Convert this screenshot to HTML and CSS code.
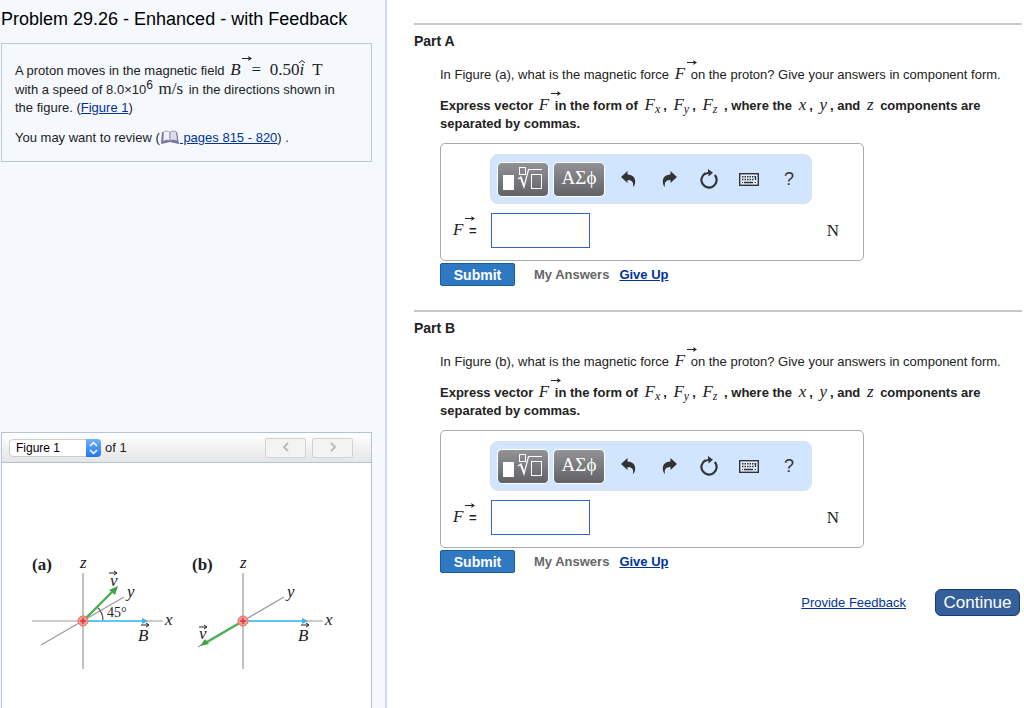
FILE: index.html
```html
<!DOCTYPE html>
<html lang="en">
<head>
    <meta charset="UTF-8">
    <meta name="viewport" content="width=device-width, initial-scale=1.0">
    <title>Problem 29.26 - Enhanced - with Feedback</title>
    <link rel="stylesheet" href="styles.css">
</head>
<body>
    <!-- shared icons -->
    <svg class="sprite" aria-hidden="true">
        <symbol id="vec-arrow" viewBox="0 0 10 5">
            <path d="M0 2.5H8" stroke="currentColor" stroke-width="1"/>
            <path d="M6 0L10 2.5L6 5L7 2.5Z" fill="currentColor"/>
        </symbol>
        <symbol id="icon-template" viewBox="0 0 40 26">
            <rect x="0" y="10" width="11" height="15" fill="#fff"/>
            <rect x="16.500" y="2.500" width="6" height="7" fill="none" stroke="#fff" stroke-width="1"/>
            <path d="M15 14L18 12L21 22L25.500 4.500H39" fill="none" stroke="#fff" stroke-width="1.200"/>
            <path d="M18 13L21 21" stroke="#fff" stroke-width="2"/>
            <rect x="28.500" y="9.500" width="10" height="14" fill="none" stroke="#fff" stroke-width="1"/>
        </symbol>
        <symbol id="icon-undo" viewBox="0 0 16 16">
            <path d="M0 6L6.500 0V3.500C12 3.500 15 7 14 12.500C13.800 14 13 15.300 12 16C12.800 12 11.500 8.800 6.500 9V12Z" fill="#333"/>
        </symbol>
        <symbol id="icon-reset" viewBox="0 0 20 20">
            <path d="M6.500 4.200A7.600 7.600 0 1 0 15.800 6" fill="none" stroke="#333" stroke-width="2.200"/>
            <path d="M9 0L14 3.700L9.500 7.500V4.800L6 6V4L9 3Z" fill="#333"/>
        </symbol>
        <symbol id="icon-keyboard" viewBox="0 0 20 13">
            <rect x="0.700" y="0.700" width="18.600" height="11.600" fill="#fff" fill-opacity="0.400" stroke="#333" stroke-width="1.400"/>
            <path d="M3 3.700H17M3 6.500H15" stroke="#333" stroke-width="1.500" stroke-dasharray="1.500 1"/>
            <path d="M16.500 3V7M5 9.500H14" stroke="#333" stroke-width="1.300"/>
            <path d="M3 9.500H4M15.500 9.500H17" stroke="#333" stroke-width="1.200"/>
        </symbol>
    </svg>

    <div class="page">
        <aside class="sidebar">
            <h1 class="title">Problem 29.26 - Enhanced - with Feedback</h1>
            <div class="problem">
                <p>A proton moves in the magnetic field <span class="vec">B<svg class="vec-arrow"><use href="#vec-arrow"/></svg></span><span class="math equation">=&nbsp; 0.50<i class="hat">i<svg class="hat-mark" viewBox="0 0 6 3"><path d="M0 3L3 0.500L6 3" fill="none" stroke="currentColor"/></svg></i>&nbsp; T</span><br>
                with a speed of 8.0×10<sup>6</sup> <span class="math">m/s</span> in the directions shown in<br>
                the figure. (<a href="#figure">Figure 1</a>)</p>
                <p>You may want to review (<a href="#pages"><svg class="book" viewBox="0 0 20 16"><path d="M2 2L1 14L10 12L19 14L17 2L10 3Z" fill="#77719b"/><path d="M3.500 2C6 0.500 8.500 1 10 2.500V11C8 9.500 5 10 3 11.500Z" fill="#f2f2f6" stroke="#8d88ad" stroke-width="0.700"/><path d="M10 2.500C12 0.500 14.500 0.800 16.500 2L17.500 11.500C15 9.800 12 9.500 10 11Z" fill="#dedee9" stroke="#77719b" stroke-width="0.700"/></svg> pages 815 - 820</a>) .</p>
            </div>

            <div class="figure-panel" id="figure">
                <div class="figure-bar">
                    <div class="select-wrap">
                        <select class="figure-select" aria-label="Figure">
                            <option>Figure 1</option>
                        </select>
                        <span class="stepper"><svg viewBox="0 0 15 18"><path d="M4 7L7.500 3.500L11 7M4 11L7.500 14.500L11 11" fill="none" stroke="#fff" stroke-width="1.500"/></svg></span>
                    </div>
                    <span class="count">of 1</span>
                    <div class="figure-nav">
                        <button class="nav-btn" aria-label="Previous figure" disabled><svg viewBox="0 0 8 10"><path d="M6 1L2 5L6 9" fill="none" stroke="#bbb" stroke-width="2"/></svg></button>
                        <button class="nav-btn" aria-label="Next figure" disabled><svg viewBox="0 0 8 10"><path d="M2 1L6 5L2 9" fill="none" stroke="#bbb" stroke-width="2"/></svg></button>
                    </div>
                </div>
                <div class="figure-body">
                    <svg class="figure-drawing" viewBox="0 0 310 120">
                        <defs>
                            <g id="proton">
                                <circle r="5" fill="#f79a92" stroke="#e96b67" stroke-width="1"/>
                                <path d="M-3 0H3M0 -3V3" stroke="#d9333b" stroke-width="1.500"/>
                            </g>
                            <g id="field">
                                <path d="M0 0H60" stroke="#5cc4f6" stroke-width="1.800"/>
                                <path d="M59 -3L65 0L59 3Z" fill="#3fb2ef"/>
                            </g>
                            <path id="over-arrow" d="M0 0H8M5 -2L8 0L5 2" fill="none" stroke="#222" stroke-width="1"/>
                        </defs>
                        <!-- (a) -->
                        <g fill="none" stroke="#999" stroke-width="1.200">
                            <path d="M2 71H133M53 23V119M11 95L94 47"/>
                            <path d="M67 57C72 61 73 66 73 71" stroke="#555"/>
                        </g>
                        <use href="#field" x="53" y="71"/>
                        <path d="M53 71L82 42" stroke="#4eae52" stroke-width="2.400"/>
                        <path d="M88 36L85 45L79 40Z" fill="#3fa447"/>
                        <use href="#proton" x="53" y="71"/>
                        <text class="fig-label" x="2" y="20">(a)</text>
                        <text class="fig-axis" x="50" y="18">z</text>
                        <text class="fig-axis" x="80" y="36">v</text>
                        <use href="#over-arrow" x="79" y="23"/>
                        <text class="fig-axis" x="97" y="47">y</text>
                        <text class="fig-angle" x="77" y="67">45°</text>
                        <text class="fig-axis" x="135" y="75">x</text>
                        <text class="fig-axis" x="108" y="91">B</text>
                        <use href="#over-arrow" x="111" y="75"/>
                        <!-- (b) -->
                        <path d="M213 71H293M213 23V119M168 97L254 47" stroke="#999" stroke-width="1.200"/>
                        <use href="#field" x="213" y="71"/>
                        <path d="M213 71L177 92" stroke="#4eae52" stroke-width="2.400"/>
                        <path d="M170 96L175 89L179 94Z" fill="#3fa447"/>
                        <use href="#proton" x="213" y="71"/>
                        <text class="fig-label" x="162" y="20">(b)</text>
                        <text class="fig-axis" x="210" y="18">z</text>
                        <text class="fig-axis" x="257" y="47">y</text>
                        <text class="fig-axis" x="169" y="89">v</text>
                        <use href="#over-arrow" x="169" y="77"/>
                        <text class="fig-axis" x="295" y="75">x</text>
                        <text class="fig-axis" x="268" y="91">B</text>
                        <use href="#over-arrow" x="271" y="75"/>
                    </svg>
                </div>
            </div>
        </aside>

        <main class="content">
            <section class="part">
                <h2>Part A</h2>
                <div class="part-body">
                    <p class="question">In Figure (a), what is the magnetic force <span class="vec">F<svg class="vec-arrow"><use href="#vec-arrow"/></svg></span> on the proton? Give your answers in component form.</p>
                    <p class="instructions">Express vector <span class="vec">F<svg class="vec-arrow"><use href="#vec-arrow"/></svg></span> in the form of <i class="math">F<sub>x</sub></i>, <i class="math">F<sub>y</sub></i>, <i class="math">F<sub>z</sub></i> , where the <i class="math">x</i>, <i class="math">y</i>, and <i class="math">z</i> components are<br>separated by commas.</p>
                    <div class="answer">
                        <div class="toolbar">
                            <button class="tool-btn" aria-label="Templates"><svg class="template"><use href="#icon-template"/></svg></button>
                            <button class="tool-btn">ΑΣϕ</button>
                            <button class="icon-btn" aria-label="Undo"><svg class="arrow-icon"><use href="#icon-undo"/></svg></button>
                            <button class="icon-btn" aria-label="Redo"><svg class="arrow-icon flip"><use href="#icon-undo"/></svg></button>
                            <button class="icon-btn" aria-label="Reset"><svg class="reset-icon"><use href="#icon-reset"/></svg></button>
                            <button class="icon-btn" aria-label="Keyboard shortcuts"><svg class="keyboard-icon"><use href="#icon-keyboard"/></svg></button>
                            <button class="icon-btn">?</button>
                        </div>
                        <div class="answer-row">
                            <label for="answerA"><span class="vec">F<svg class="vec-arrow"><use href="#vec-arrow"/></svg></span> =</label>
                            <input type="text" class="answer-input" id="answerA">
                            <span class="unit">N</span>
                        </div>
                    </div>
                    <div class="actions">
                        <button class="submit-btn">Submit</button>
                        <span class="my-answers">My Answers</span>
                        <a href="#giveup">Give Up</a>
                    </div>
                </div>
            </section>

            <section class="part">
                <h2>Part B</h2>
                <div class="part-body">
                    <p class="question">In Figure (b), what is the magnetic force <span class="vec">F<svg class="vec-arrow"><use href="#vec-arrow"/></svg></span> on the proton? Give your answers in component form.</p>
                    <p class="instructions">Express vector <span class="vec">F<svg class="vec-arrow"><use href="#vec-arrow"/></svg></span> in the form of <i class="math">F<sub>x</sub></i>, <i class="math">F<sub>y</sub></i>, <i class="math">F<sub>z</sub></i> , where the <i class="math">x</i>, <i class="math">y</i>, and <i class="math">z</i> components are<br>separated by commas.</p>
                    <div class="answer">
                        <div class="toolbar">
                            <button class="tool-btn" aria-label="Templates"><svg class="template"><use href="#icon-template"/></svg></button>
                            <button class="tool-btn">ΑΣϕ</button>
                            <button class="icon-btn" aria-label="Undo"><svg class="arrow-icon"><use href="#icon-undo"/></svg></button>
                            <button class="icon-btn" aria-label="Redo"><svg class="arrow-icon flip"><use href="#icon-undo"/></svg></button>
                            <button class="icon-btn" aria-label="Reset"><svg class="reset-icon"><use href="#icon-reset"/></svg></button>
                            <button class="icon-btn" aria-label="Keyboard shortcuts"><svg class="keyboard-icon"><use href="#icon-keyboard"/></svg></button>
                            <button class="icon-btn">?</button>
                        </div>
                        <div class="answer-row">
                            <label for="answerB"><span class="vec">F<svg class="vec-arrow"><use href="#vec-arrow"/></svg></span> =</label>
                            <input type="text" class="answer-input" id="answerB">
                            <span class="unit">N</span>
                        </div>
                    </div>
                    <div class="actions">
                        <button class="submit-btn">Submit</button>
                        <span class="my-answers">My Answers</span>
                        <a href="#giveup">Give Up</a>
                    </div>
                </div>
            </section>

            <div class="page-footer">
                <a href="#feedback">Provide Feedback</a>
                <button class="continue-btn">Continue</button>
            </div>
        </main>
    </div>
</body>
</html>
```
FILE: styles.css
```css
* {
    margin: 0;
    padding: 0;
    box-sizing: border-box;
}

body {
    font-family: "Liberation Sans", Arial, sans-serif;
    font-size: 13px;
    line-height: 18px;
    color: #222;
    background: #fff;
}

a {
    color: #003399;
}

button {
    font-family: inherit;
    cursor: pointer;
}

.sprite {
    display: none;
}

.page {
    display: flex;
    min-height: 100vh;
}

/* Sidebar */
.sidebar {
    flex: 0 0 387px;
    display: flex;
    flex-direction: column;
    padding: 8px 13px 0 1px;
    background: #f5f8fd;
    border-right: 2px solid #d0dbe8;
}

.title {
    margin-bottom: 13px;
    font-size: 18px;
    font-weight: normal;
    line-height: 22px;
    color: #000;
}

.problem {
    padding: 15px 13px 14px;
    border: 1px solid #b9c9dc;
}

.problem p + p {
    margin-top: 12px;
}

.problem sup {
    font-size: 12px;
    line-height: 0;
    vertical-align: 5px;
}

.book {
    width: 20px;
    height: 16px;
    vertical-align: -4px;
}

/* Math */
.math,
.vec {
    margin: 0 2px;
    font-family: "Liberation Serif", "Times New Roman", serif;
    font-size: 17px;
    font-weight: normal;
    line-height: 16px;
}

.vec {
    position: relative;
    font-style: italic;
}

.vec-arrow {
    position: absolute;
    top: -4px;
    left: 12px;
    width: 10px;
    height: 5px;
}

.equation {
    margin-left: 9px;
    line-height: 22px;
}

.hat {
    position: relative;
}

.hat-mark {
    position: absolute;
    top: 0;
    left: 0;
    width: 6px;
    height: 3px;
}

.math sub {
    font-size: 12px;
    line-height: 0;
    vertical-align: -3px;
}

/* Figure */
.figure-panel {
    margin-top: auto;
    border: 1px solid #b3c3db;
    border-bottom: none;
    background: #fff;
}

.figure-bar {
    display: flex;
    align-items: center;
    height: 30px;
    padding: 0 18px 0 7px;
    background: linear-gradient(#fff, #e5e5e5);
    border-bottom: 1px solid #b3c3db;
}

.select-wrap {
    position: relative;
    display: flex;
}

.figure-select {
    width: 92px;
    height: 18px;
    padding: 0 20px 0 6px;
    appearance: none;
    border: 1px solid #ccc;
    border-radius: 4px;
    background: #fff;
    font-family: inherit;
    font-size: 12px;
    color: #000;
}

.stepper {
    position: absolute;
    top: 0;
    right: 0;
    width: 15px;
    height: 18px;
    border-radius: 0 4px 4px 0;
    background: linear-gradient(#6fb1fa, #2176f5);
    pointer-events: none;
}

.stepper svg {
    display: block;
}

.count {
    margin-left: 4px;
}

.figure-nav {
    display: flex;
    gap: 6px;
    margin-left: auto;
}

.nav-btn {
    width: 41px;
    height: 20px;
    border: 1px solid #d3d3d3;
    border-radius: 2px;
    background: #f3f3f3;
}

.nav-btn svg {
    width: 8px;
    height: 10px;
}

.figure-body {
    padding: 87px 28px 38px;
}

.figure-drawing {
    display: block;
    width: 310px;
    height: 120px;
}

.fig-label,
.fig-axis,
.fig-angle {
    font-family: "Liberation Serif", "Times New Roman", serif;
    font-size: 17px;
    fill: #222;
}

.fig-label {
    font-weight: bold;
}

.fig-axis {
    font-style: italic;
}

.fig-angle {
    font-size: 14px;
}

/* Parts */
.content {
    flex: 1;
    min-width: 0;
    padding: 23px 2px 0 27px;
}

.part {
    margin-bottom: 24px;
    padding-top: 6px;
    border-top: 2px solid #c8c8c8;
}

.part:last-of-type {
    margin-bottom: 16px;
}

.part h2 {
    font-size: 14px;
    line-height: 20px;
}

.part-body {
    padding-left: 26px;
}

.question {
    margin-top: 15px;
    white-space: nowrap;
}

.instructions {
    margin-top: 13px;
    font-weight: bold;
}

.instructions .math {
    margin: 0 3px;
}

.answer {
    max-width: 424px;
    height: 118px;
    margin-top: 10px;
    padding: 10px 0 0 12px;
    border: 1px solid #aaa;
    border-radius: 5px;
}

.toolbar {
    display: flex;
    align-items: center;
    width: 322px;
    height: 50px;
    margin-left: 37px;
    padding-left: 6px;
    border: 1px solid #dcdfe6;
    border-radius: 8px;
    background: #d1e5fe;
}

.tool-btn {
    display: flex;
    align-items: center;
    justify-content: center;
    width: 52px;
    height: 35px;
    margin-right: 4px;
    padding-bottom: 3px;
    border: 1px solid #fff;
    border-radius: 5px;
    background: linear-gradient(#929297, #626266);
    color: #fff;
    font-family: "Liberation Serif", "Times New Roman", serif;
    font-size: 19px;
}

.template {
    width: 40px;
    height: 26px;
}

.icon-btn {
    display: flex;
    align-items: center;
    justify-content: center;
    width: 40px;
    height: 34px;
    border: none;
    background: none;
    color: #333;
    font-size: 18px;
}

.arrow-icon {
    width: 16px;
    height: 16px;
}

.flip {
    transform: scaleX(-1);
}

.reset-icon {
    width: 20px;
    height: 20px;
}

.keyboard-icon {
    width: 20px;
    height: 13px;
}

.answer-row {
    display: flex;
    align-items: center;
    margin-top: 9px;
}

.answer-row label {
    width: 38px;
    font-weight: bold;
}

.answer-row .vec {
    margin-left: 0;
}

.answer-input {
    width: 99px;
    height: 35px;
    padding: 0 6px;
    border: 1px solid #3565c4;
    background: #fff;
    font-family: "Liberation Serif", "Times New Roman", serif;
    font-size: 17px;
}

.unit {
    margin-left: auto;
    margin-right: 24px;
    font-family: "Liberation Serif", "Times New Roman", serif;
    font-size: 17px;
}

.actions {
    display: flex;
    align-items: center;
    margin-top: 2px;
    font-weight: bold;
}

.submit-btn {
    width: 75px;
    height: 23px;
    border: 1px solid #1d5a9c;
    border-radius: 2px;
    background: #2f79c4;
    color: #fff;
    font-size: 14px;
    font-weight: bold;
}

.my-answers {
    margin: 0 10px 0 19px;
    color: #666;
}

/* Footer */
.page-footer {
    display: flex;
    align-items: center;
    justify-content: flex-end;
    gap: 29px;
    padding-right: 2px;
}

.continue-btn {
    width: 85px;
    height: 27px;
    border: 1px solid #153f70;
    border-radius: 6px;
    background: #355f9b;
    color: #fff;
    font-size: 17px;
}
```
